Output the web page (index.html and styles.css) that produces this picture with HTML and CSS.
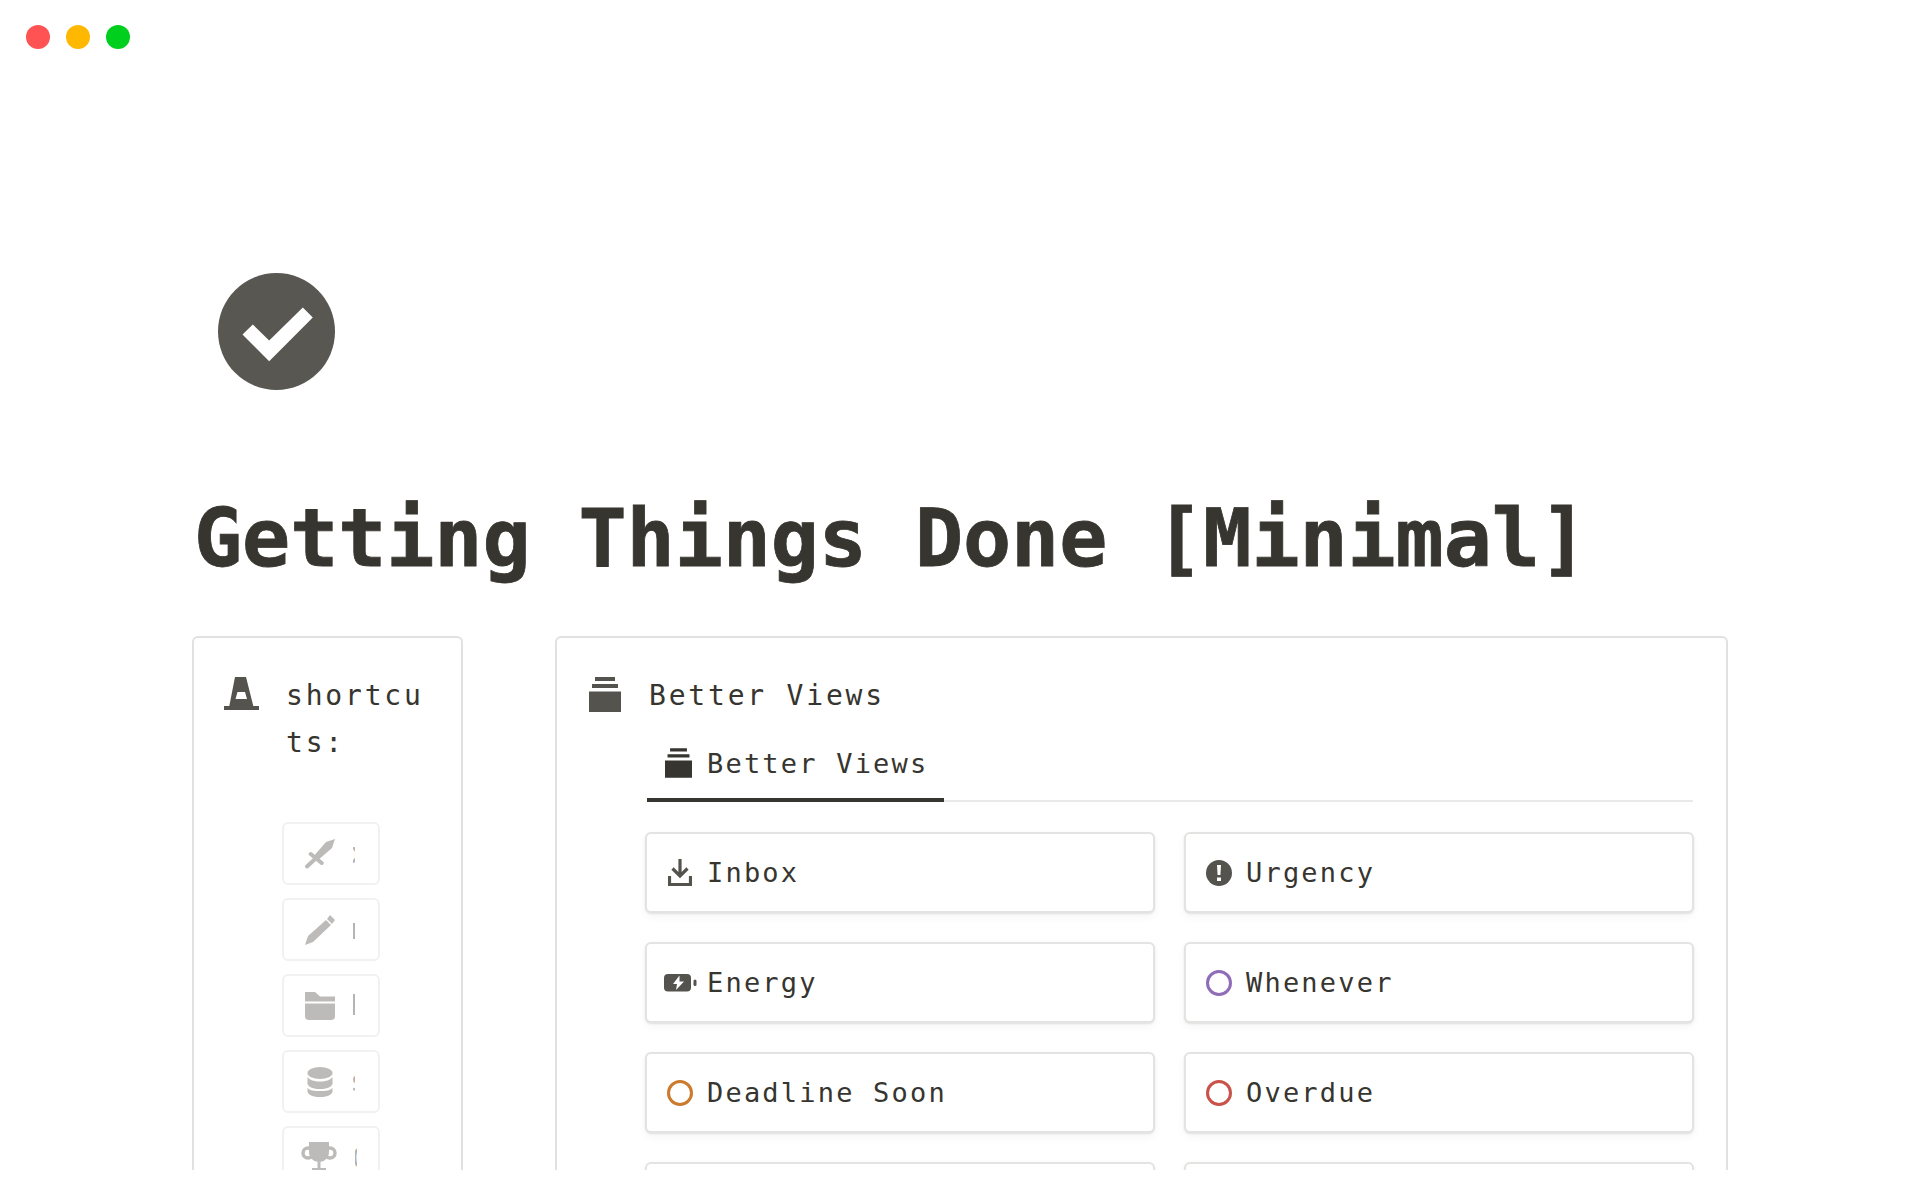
FILE: index.html
```html
<!DOCTYPE html>
<html lang="en">
<head>
<meta charset="utf-8">
<title>Getting Things Done [Minimal]</title>
<link rel="stylesheet" href="styles.css">
</head>
<body>
<div class="page">
  <div class="dots"><span class="dot red"></span><span class="dot amber"></span><span class="dot green"></span></div>
  <svg class="hero" viewBox="0 0 117 117"><circle cx="58.5" cy="58.5" r="58.5" fill="#585751"/><polygon fill="#fff" points="24.5,61.5 34.8,51.5 51.2,67.5 84.8,34.5 94.8,44.5 51.2,88.2"/></svg>
  <h1 class="title">Getting Things Done [Minimal]</h1>
  <div class="columns">
    <aside class="panel side">
      <div class="head">
        <svg class="ico-cone" viewBox="0 0 35 33"><path fill-rule="evenodd" d="M11 0h11l7.300 29H35v4H0v-4h5.300zM13.500 15l-2 7h11.500l-2-7z"/></svg>
        <span class="head-text narrow">shortcuts:</span>
      </div>
      <div class="shortcuts">
        <div class="sc"><svg class="ico-sc" viewBox="0 0 30 30"><polygon points="30,0 27,9 12,22 8,18 21,3"/><path d="M5.700 15L16.700 24M9 21L2 27.500" fill="none" stroke="#bcbbb9" stroke-width="4" stroke-linecap="round"/></svg><span class="sliver">x</span></div>
        <div class="sc"><svg class="ico-sc" viewBox="0 0 30 30"><polygon points="25,0 30,5 27,9 22,4"/><polygon points="21,5 26,10 8,27 0,30 3,21"/></svg><span class="sliver">next</span></div>
        <div class="sc"><svg class="ico-sc" viewBox="0 0 30 28"><path d="M0 0h10l5 4.500h15v5H0zM0 11.500h30V24a4 4 0 0 1-4 4H4a4 4 0 0 1-4-4z"/></svg><span class="sliver">Projects</span></div>
        <div class="sc"><svg class="ico-sc" viewBox="0 0 30 30"><ellipse cx="15" cy="6" rx="12.500" ry="6"/><path d="M2.500 10c2 3 6.500 4.500 12.500 4.500S25.500 13 27.500 10v7c-1 3-6 5-12.500 5S3.500 20 2.500 17zM2.500 21c2 2.500 6.500 3 12.500 3s10.500-.5 12.500-3v4c-1 3-6 5-12.500 5S3.500 28 2.500 25z"/></svg><span class="sliver">someday</span></div>
        <div class="sc sc-top"><svg class="ico-trophy" viewBox="0 0 36 36"><path d="M8 0h20v10c0 6-5 10-10 10S8 16 8 10z"/><circle cx="7" cy="11" r="5" fill="none" stroke="#bcbbb9" stroke-width="3.500"/><circle cx="29" cy="11" r="5" fill="none" stroke="#bcbbb9" stroke-width="3.500"/><path d="M16.500 20h3v6h-3zM11 26h14v4H11z"/></svg><span class="sliver">Goals</span></div>
      </div>
    </aside>
    <main class="panel views">
      <div class="head">
        <svg class="ico-stack" viewBox="0 0 32 35"><path d="M6 0h20v4H6zM3 7h26v4H3zM0 14.500h32V35H0z"/></svg>
        <span class="head-text">Better Views</span>
      </div>
      <div class="tabs">
        <div class="tab">
          <svg class="ico-tab" viewBox="0 0 32 35"><path d="M6 0h20v4H6zM3 7h26v4H3zM0 14.500h32V35H0z"/></svg>
          <span class="tab-label">Better Views</span>
        </div>
      </div>
      <div class="grid">
        <div class="card"><span class="slot"><svg class="ico-in" viewBox="0 0 24 27"><path d="M12 0v16M4.500 9.500L12 17l7.500-7.500M1.500 17v8.500h21V17" fill="none" stroke="#55534e" stroke-width="3.200"/></svg></span><span>Inbox</span></div>
        <div class="card"><span class="slot"><svg class="ico-ring" viewBox="0 0 26 26"><circle cx="13" cy="13" r="13" fill="#55534e"/><path fill="#fff" d="M11 5h4l-.6 10h-2.800zM11 17.500h4V21h-4z"/></svg></span><span>Urgency</span></div>
        <div class="card"><span class="slot"><svg class="ico-bat" viewBox="0 0 33 18"><rect width="27" height="17.500" rx="4" fill="#55534e"/><rect x="29.500" y="5.500" width="3" height="6.500" rx="1.500" fill="#55534e"/><polygon fill="#fff" points="15.500,1.500 9,10 13,10 12,16 20,7.500 15.500,7.500"/></svg></span><span>Energy</span></div>
        <div class="card"><span class="slot"><span class="ring purple"></span></span><span>Whenever</span></div>
        <div class="card"><span class="slot"><span class="ring orange"></span></span><span>Deadline Soon</span></div>
        <div class="card"><span class="slot"><span class="ring crimson"></span></span><span>Overdue</span></div>
        <div class="card"></div>
        <div class="card"></div>
      </div>
    </main>
  </div>
</div>
</body>
</html>
```

FILE: styles.css
```css
* { box-sizing: border-box; }
html, body { margin: 0; padding: 0; background: #fff; }
body { font-family: "DejaVu Sans Mono", "Liberation Mono", monospace; color: #37352f; }
.page { height: 1170px; overflow: hidden; }

.dots { display: flex; gap: 16px; padding: 25px 0 0 26px; }
.dot { width: 24px; height: 24px; border-radius: 50%; }
.red { background: #ff5252; }
.amber { background: #ffb800; }
.green { background: #00cf1e; }

.hero { display: block; width: 117px; height: 117px; margin: 224px 0 0 217.5px; }

.title { margin: 101px 0 0 194px; font-size: 80px; line-height: 96px; font-weight: 700; white-space: nowrap; letter-spacing: -0.1px; -webkit-text-stroke: 0.8px #37352f; }

.columns { display: flex; gap: 92px; margin: 49px 0 0 192px; }
.panel { border: 2px solid #e1e1e0; border-radius: 6px; height: 700px; flex: none; }
.side { width: 271px; padding: 33px 0 0 30px; }
.views { width: 1173px; padding: 33px 33px 0 32px; }

.head { display: flex; align-items: flex-start; font-size: 28px; letter-spacing: 2.8px; line-height: 47px; }
.head-text { display: block; position: relative; top: 1px; }
.narrow { width: 140px; word-break: break-all; margin-left: 27px; }
.ico-cone { width: 35px; height: 33px; fill: #55534e; margin-top: 6px; flex: none; }
.ico-stack { width: 32px; height: 35px; fill: #55534e; margin: 6px 28px 0 0; flex: none; }

.shortcuts { display: flex; flex-direction: column; gap: 13px; margin: 57px 0 0 58px; }
.sc { width: 98px; height: 63px; flex: none; border: 2px solid #f1f1f0; border-radius: 6px; display: flex; align-items: center; padding-left: 21px; }
.sc-top { align-items: flex-start; padding: 14px 0 0 17px; }
.ico-sc { width: 30px; height: 30px; fill: #bcbbb9; flex: none; }
.ico-trophy { width: 36px; height: 36px; fill: #bcbbb9; flex: none; }
.sliver { width: 2px; margin-left: 18px; overflow: hidden; white-space: nowrap; font-size: 28px; color: #b5b4b1; line-height: 34px; text-indent: -3px; }

.tabs { margin: 9px 0 0 58px; border-bottom: 2px solid #e9e9e8; height: 75px; }
.tab { width: 297px; height: 75px; border-bottom: 4px solid #37352f; display: flex; align-items: center; padding-left: 18px; font-size: 27px; letter-spacing: 2.2px; white-space: nowrap; }
.tab-label { padding-top: 2px; }
.ico-tab { width: 27px; height: 30px; fill: #37352f; margin-right: 15px; flex: none; }

.grid { display: grid; grid-template-columns: 510px 510px; gap: 29px; margin: 30px 0 0 56px; font-size: 27px; letter-spacing: 2.2px; }
.card { height: 81px; border: 2px solid #e3e3e2; border-radius: 6px; display: flex; align-items: center; box-shadow: 0 1px 2px rgba(15,15,15,.1), 0 4px 10px rgba(15,15,15,.04); background: #fff; white-space: nowrap; }
.slot { width: 60px; flex: none; display: flex; justify-content: center; padding-left: 5px; }
.ico-in { width: 24px; height: 27px; display: block; }
.ico-ring { width: 26px; height: 26px; display: block; }
.ico-bat { width: 33px; height: 18px; display: block; margin-left: 2px; }
.ring { width: 26px; height: 26px; border-radius: 50%; border: 3px solid; display: block; }
.purple { border-color: #8f6cb8; }
.orange { border-color: #cb7b2e; }
.crimson { border-color: #c9534a; }
```
